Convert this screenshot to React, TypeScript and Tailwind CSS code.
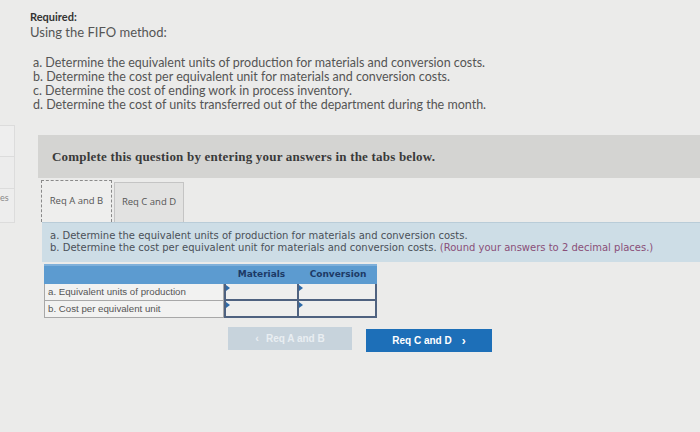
import React from "react";

export default function App() {
  return (
    <div className="w-[700px] h-[432px] bg-[#ebebea] overflow-hidden text-[#4a4a4a]" style={{ fontFamily: "Lato, 'Open Sans', sans-serif" }}>
      <div className="pl-[30px] pt-[10px]">
        <div className="text-[11px] font-bold leading-[14px] text-[#333]">Required:</div>
        <div className="text-[13px] leading-[17px] text-[#555]">Using the FIFO method:</div>
        <div className="mt-[15px] pl-[3px] text-[12.5px] leading-[14px] text-[#555]">
          <div>a. Determine the equivalent units of production for materials and conversion costs.</div>
          <div>b. Determine the cost per equivalent unit for materials and conversion costs.</div>
          <div>c. Determine the cost of ending work in process inventory.</div>
          <div>d. Determine the cost of units transferred out of the department during the month.</div>
        </div>
      </div>

      <div className="flex mt-[23px]">
        <div className="w-[15px] flex flex-col">
          <div className="h-[32px] border border-[#dcdcdc] border-l-0 bg-[#eeeeee] -mt-[10px]" />
          <div className="h-[32px] border border-t-0 border-[#dcdcdc] border-l-0 bg-[#ececec]" />
          <div className="h-[34px] border border-t-0 border-[#dcdcdc] border-l-0 bg-[#ededed] text-[9px] text-[#888] pt-[4px] leading-[10px] overflow-hidden">es</div>
        </div>
        <div className="ml-[23px] flex-1">
          <div className="h-[43px] bg-[#d4d4d2] flex items-center pl-[14px]">
            <span className="text-[13px] font-bold text-[#3a3a3a] tracking-[0.2px]" style={{ fontFamily: "'Liberation Serif', serif" }}>
              Complete this question by entering your answers in the tabs below.
            </span>
          </div>
          <div className="flex mt-[2px] pl-[3px] h-[42px] items-end">
            <div className="w-[71px] h-[42px] border border-dashed border-[#8a8a8a] border-b-0 bg-[#eeeeed] flex items-center justify-center text-[9.5px] text-[#555]" style={{ fontFamily: "'Open Sans', sans-serif" }}>
              Req A and B
            </div>
            <div className="ml-[2px] w-[70px] h-[40px] border border-[#c4c4c4] border-b-0 bg-[#e2e2e1] flex items-center justify-center text-[9.5px] text-[#555]" style={{ fontFamily: "'Open Sans', sans-serif" }}>
              Req C and D
            </div>
          </div>
          <div className="ml-[4px] h-[40px] bg-[#cddde6] border-t border-[#b9ccd8] pl-[8px] pt-[7px] text-[10px] leading-[12px] text-[#4a5058]" style={{ fontFamily: "'DejaVu Sans', sans-serif" }}>
            <div>a. Determine the equivalent units of production for materials and conversion costs.</div>
            <div>
              b. Determine the cost per equivalent unit for materials and conversion costs.{" "}
              <span className="text-[#8a4f78]">(Round your answers to 2 decimal places.)</span>
            </div>
          </div>
          <div className="ml-[6px] mt-[2px] w-[333px] text-[9.7px]" style={{ fontFamily: "'Liberation Sans', Arial, sans-serif" }}>
            <div className="flex h-[20px] bg-[#5c9bd0] border-t-2 border-[#7fb0da]">
              <div className="w-[180px]" />
              <div className="w-[75px] flex items-center justify-center font-bold text-[#1d3a66] text-[9px]" style={{ fontFamily: "'DejaVu Sans', sans-serif" }}>Materials</div>
              <div className="w-[78px] flex items-center justify-center font-bold text-[#1d3a66] text-[9px]" style={{ fontFamily: "'DejaVu Sans', sans-serif" }}>Conversion</div>
            </div>
            {["a. Equivalent units of production", "b. Cost per equivalent unit"].map((t) => (
              <div key={t} className="flex h-[17px]">
                <div className="w-[180px] bg-[#f2f2f1] border border-t-0 border-[#a8a8a8] pl-[3px] flex items-center text-[#555] leading-none">{t}</div>
                <div className="relative w-[75px] border-2 border-t-0 border-[#4f6280] bg-[#efefee]">
                  <div className="absolute left-[0px] top-[1px] w-0 h-0 border-t-[3px] border-b-[3px] border-l-[4px] border-t-transparent border-b-transparent border-l-[#2e6aa8]" />
                </div>
                <div className="relative w-[78px] border-2 border-t-0 border-l-0 border-[#4f6280] bg-[#efefee]">
                  <div className="absolute left-[0px] top-[1px] w-0 h-0 border-t-[3px] border-b-[3px] border-l-[4px] border-t-transparent border-b-transparent border-l-[#2e6aa8]" />
                </div>
              </div>
            ))}
          </div>
          <div className="flex mt-[9px] ml-[190px] items-start" style={{ fontFamily: "'Liberation Sans', Arial, sans-serif" }}>
            <div className="w-[124px] h-[23px] bg-[#c7d3dc] flex items-center justify-center gap-[7px] text-[10px] font-bold text-[#e9eef2]">
              <span className="text-[11px]">‹</span>
              <span>Req A and B</span>
            </div>
            <div className="ml-[14px] mt-[2px] w-[126px] h-[23px] bg-[#1d6fb8] flex items-center justify-center gap-[10px] text-[10px] font-bold text-white">
              <span>Req C and D</span>
              <span className="text-[12px]">›</span>
            </div>
          </div>
        </div>
      </div>
    </div>
  );
}
